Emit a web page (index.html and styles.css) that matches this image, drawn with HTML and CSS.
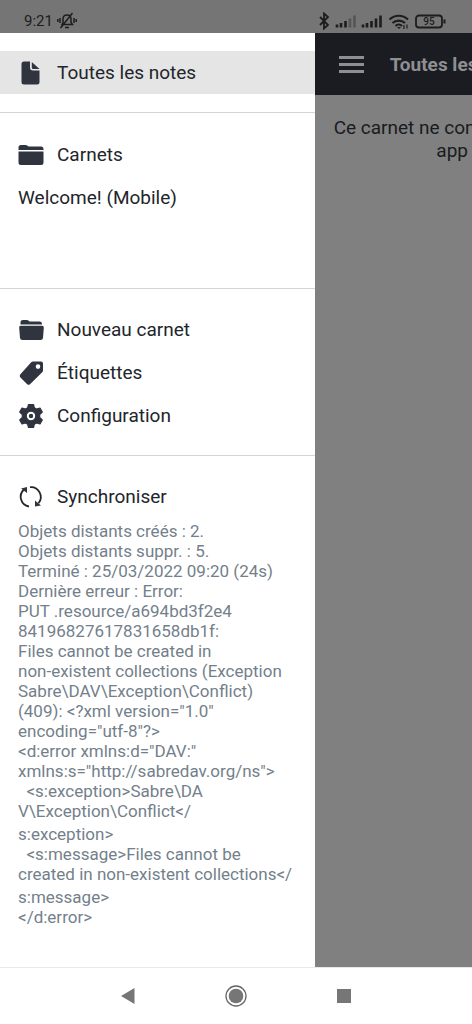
FILE: index.html
```html
<!DOCTYPE html>
<html lang="fr">
<head>
<meta charset="utf-8">
<meta name="viewport" content="width=device-width, initial-scale=1">
<title>Toutes les notes</title>
<link rel="stylesheet" href="styles.css">
</head>
<body>
<div class="phone">
  <div class="status">
    <span class="time">9:21</span>
    <svg class="mute" width="20" height="18" viewBox="0 0 20 18" fill="none" stroke="#1d1d1d" stroke-width="1.5">
      <path d="M5 12.500h10.500L14 10.500V7c0-2.500-1.500-4-4-4S6 4.500 6 7v3.500z"/><path d="M8 15.500h4M3.500 16L15.500 1M3 6v5M.8 7v3M17 6v5M19.200 7v3"/>
    </svg>
    <span class="spacer"></span>
    <svg width="128" height="18" viewBox="0 0 128 18" fill="none" stroke="#1d1d1d" stroke-width="1.8">
      <path d="M2 5l8 8-4 3.500v-15L10 5l-8 8"/>
      <g stroke-width="2.600"><path d="M19 15.500v-3M23 15.500v-4.500M27.500 15.500v-6.500"/><path stroke="#555" d="M32 15.500V6.500M36.500 15.500V3.500"/><path d="M45 15.500v-3M49 15.500v-4.500M53.500 15.500v-6.500M58 15.500V6.500M62.500 15.500V3.500"/></g>
      <g stroke-width="2.200"><path d="M71.500 7.500c5.500-5 13-5 18.500 0M74.500 11c3.500-3.300 9-3.300 12.500 0M77.500 14c2-2 4.500-2 6.500 0"/></g>
      <path d="M79 15h4l-2 2z" fill="#1d1d1d" stroke="none"/><path stroke-width="1.200" d="M86 13v4M89 12.500v4"/>
      <rect x="98" y="3.500" width="26" height="12" rx="3"/><path stroke-width="2" d="M126.500 7.500v4"/>
      <text class="battery" x="111" y="13" text-anchor="middle" stroke="none">95</text>
    </svg>
  </div>

  <div class="app">
    <nav class="drawer">
      <section class="group first">
        <button class="row active">
          <svg class="icon" viewBox="0 0 26 26"><path d="M6 1.500h6v6a3 3 0 0 0 3 3h6.500v11.500a2.500 2.500 0 0 1-2.500 2.500H6A2.500 2.500 0 0 1 3.500 22V4A2.500 2.500 0 0 1 6 1.500zM13.800 2l7.700 7h-6.200a1.500 1.500 0 0 1-1.500-1.500z"/></svg>
          Toutes les notes
        </button>
      </section>
      <section class="group books">
        <button class="row">
          <svg class="icon" viewBox="0 0 26 26"><path d="M.5 8V5.500Q.5 3 3 3h4.500q2 0 3 1.500h12.500Q25.500 4.500 25.500 7v1zM.5 9.500h25v11q0 2.500-2.500 2.500H3Q.5 23 .5 20.500z"/></svg>
          Carnets
        </button>
        <button class="row">Welcome! (Mobile)</button>
      </section>
      <section class="group">
        <button class="row">
          <svg class="icon" viewBox="0 0 26 26"><path d="M2.500 7.500V5Q2.500 3 5 3h4q1.500 0 2.500 1.500h10q2.500 0 2.500 3zM2.500 8.800h21.500q2 0 1.800 2L25 21q-.2 2-2.500 2h-18q-2.300 0-2.500-2l-.8-10.200q-.2-2 1.300-2z"/></svg>
          Nouveau carnet
        </button>
        <button class="row">
          <svg class="icon" viewBox="0 0 26 26"><path fill-rule="evenodd" d="M15 1.500h8q2 0 2 2v7q0 1-.8 1.800L12 24.300q-1.500 1-2.800 0l-7-7q-1-1.300 0-2.800L13.200 2.300Q14 1.500 15 1.500zM20 4.300a2.300 2.300 0 1 0 0 4.600 2.300 2.300 0 0 0 0-4.600z"/></svg>
          Étiquettes
        </button>
        <button class="row">
          <svg class="icon" viewBox="0 0 26 26"><path fill-rule="evenodd" stroke="#30343f" stroke-width="1.2" stroke-linejoin="round" d="M10.500 1.500h5l.8 3.200 2.200 1.300 3.500-1 2.300 4-2.600 2.500v3l2.600 2.500-2.300 4-3.500-1-2.200 1.300-.8 3.200h-5l-.8-3.200L7.500 20 4 21l-2.300-4 2.600-2.500v-3L1.700 9 4 5l3.500 1 2.200-1.300zM13 8.200a4.800 4.800 0 1 0 0 9.600 4.800 4.800 0 0 0 0-9.600z"/><circle cx="13" cy="13" r="2.200"/></svg>
          Configuration
        </button>
      </section>
      <section class="group last">
        <button class="row">
          <svg class="icon" viewBox="0 0 26 26"><g fill="none" stroke="#22252b" stroke-width="1.800"><path d="M11 22.500A9.800 9.800 0 0 1 6 5.500M12 3.200a9.800 9.800 0 0 1 8.500 16"/></g><path d="M3 4.500l6-1.500v6zM17 16.500V22.500l6-1z"/></svg>
          Synchroniser
        </button>
        <div class="report">
          <p>Objets distants créés : 2.
Objets distants suppr. : 5.
Terminé : 25/03/2022 09:20 (24s)
Dernière erreur : Error:
PUT .resource/a694bd3f2e4
84196827617831658db1f:
Files cannot be created in
non-existent collections (Exception
Sabre\DAV\Exception\Conflict)
(409): &lt;?xml version="1.0"
encoding="utf-8"?&gt;
&lt;d:error xmlns:d="DAV:"
xmlns:s="http://sabredav.org/ns"&gt;
  &lt;s:exception&gt;Sabre\DA
V\Exception\Conflict&lt;/</p>
          <p>s:exception&gt;
  &lt;s:message&gt;Files cannot be
created in non-existent collections&lt;/</p>
          <p>s:message&gt;
&lt;/d:error&gt;</p>
        </div>
      </section>
    </nav>
    <main class="page">
      <header class="bar">
        <button class="menu" aria-label="Menu"><span></span><span></span><span></span></button>
        <h1>Toutes les</h1>
      </header>
      <p class="empty">Ce carnet ne con</p>
      <p class="empty next">app</p>
    </main>
  </div>

  <div class="keys">
    <button aria-label="Retour"><svg width="24" height="24" viewBox="0 0 24 24"><path d="M5 12L18.500 4v16z"/></svg></button>
    <button aria-label="Accueil"><svg width="24" height="24" viewBox="0 0 24 24"><circle cx="12" cy="12" r="7.300"/><circle cx="12" cy="12" r="10" fill="none" stroke="#666" stroke-width="1.300"/></svg></button>
    <button aria-label="Applications récentes"><svg width="24" height="24" viewBox="0 0 24 24"><path d="M5 5h14v14H5z"/></svg></button>
  </div>
</div>
</body>
</html>
```
FILE: styles.css
```css
* { box-sizing: border-box; }
body { margin: 0; font-family: Roboto, sans-serif; background: #fff; color: #22252b; }
button { margin: 0; padding: 0; border: 0; background: none; font: inherit; color: inherit; text-align: left; }
p, h1 { margin: 0; }

.phone { display: flex; flex-direction: column; min-height: 100vh; }

.status { display: flex; align-items: center; height: 33px; padding: 8px 26px 0 24px; background: #757575; color: #1d1d1d; }
.time { font-size: 15px; line-height: 20px; }
.mute { margin-left: 4px; }
.spacer { flex: 1; }
.battery { font-size: 10px; font-weight: 500; fill: #1d1d1d; }

.app { flex: 1; display: grid; grid-template-columns: 2fr 1fr; }
.drawer { min-width: 0; background: #fff; }
.group { padding: 19px 0 18px; border-bottom: 1px solid #d4d4d4; }
.first { padding-top: 18px; }
.books { min-height: 176px; padding-top: 20px; }
.last { border-bottom: 0; }
.row { display: flex; align-items: center; gap: 13px; width: 100%; height: 43px; padding: 0 18px; font-size: 19px; white-space: nowrap; }
.active { background: #e5e5e5; }
.icon { width: 26px; height: 26px; flex: none; fill: #30343f; }
.report { display: flex; flex-direction: column; gap: 3px; padding: 3px 0 0 18px; font-size: 17px; line-height: 20px; color: #747f8b; white-space: pre; }

.page { min-width: 0; overflow: hidden; background: #808080; }
.bar { display: flex; align-items: center; gap: 26px; height: 62px; padding-left: 24px; background: #1b1c22; color: #8e8f92; }
.bar h1 { font-size: 19px; font-weight: 700; white-space: nowrap; }
.menu { display: flex; flex: none; flex-direction: column; gap: 4px; width: 25px; }
.menu span { height: 3px; background: #8e8f92; }
.empty { padding: 21px 0 0 19px; font-size: 19px; line-height: 23px; white-space: nowrap; color: #191b1f; }
.next { padding: 0 4px 0 0; text-align: right; }

.keys { display: flex; justify-content: center; align-items: center; gap: 84px; height: 57px; border-top: 1px solid #e8e8e8; }
.keys button { display: flex; }
.keys svg { fill: #767676; }
```
